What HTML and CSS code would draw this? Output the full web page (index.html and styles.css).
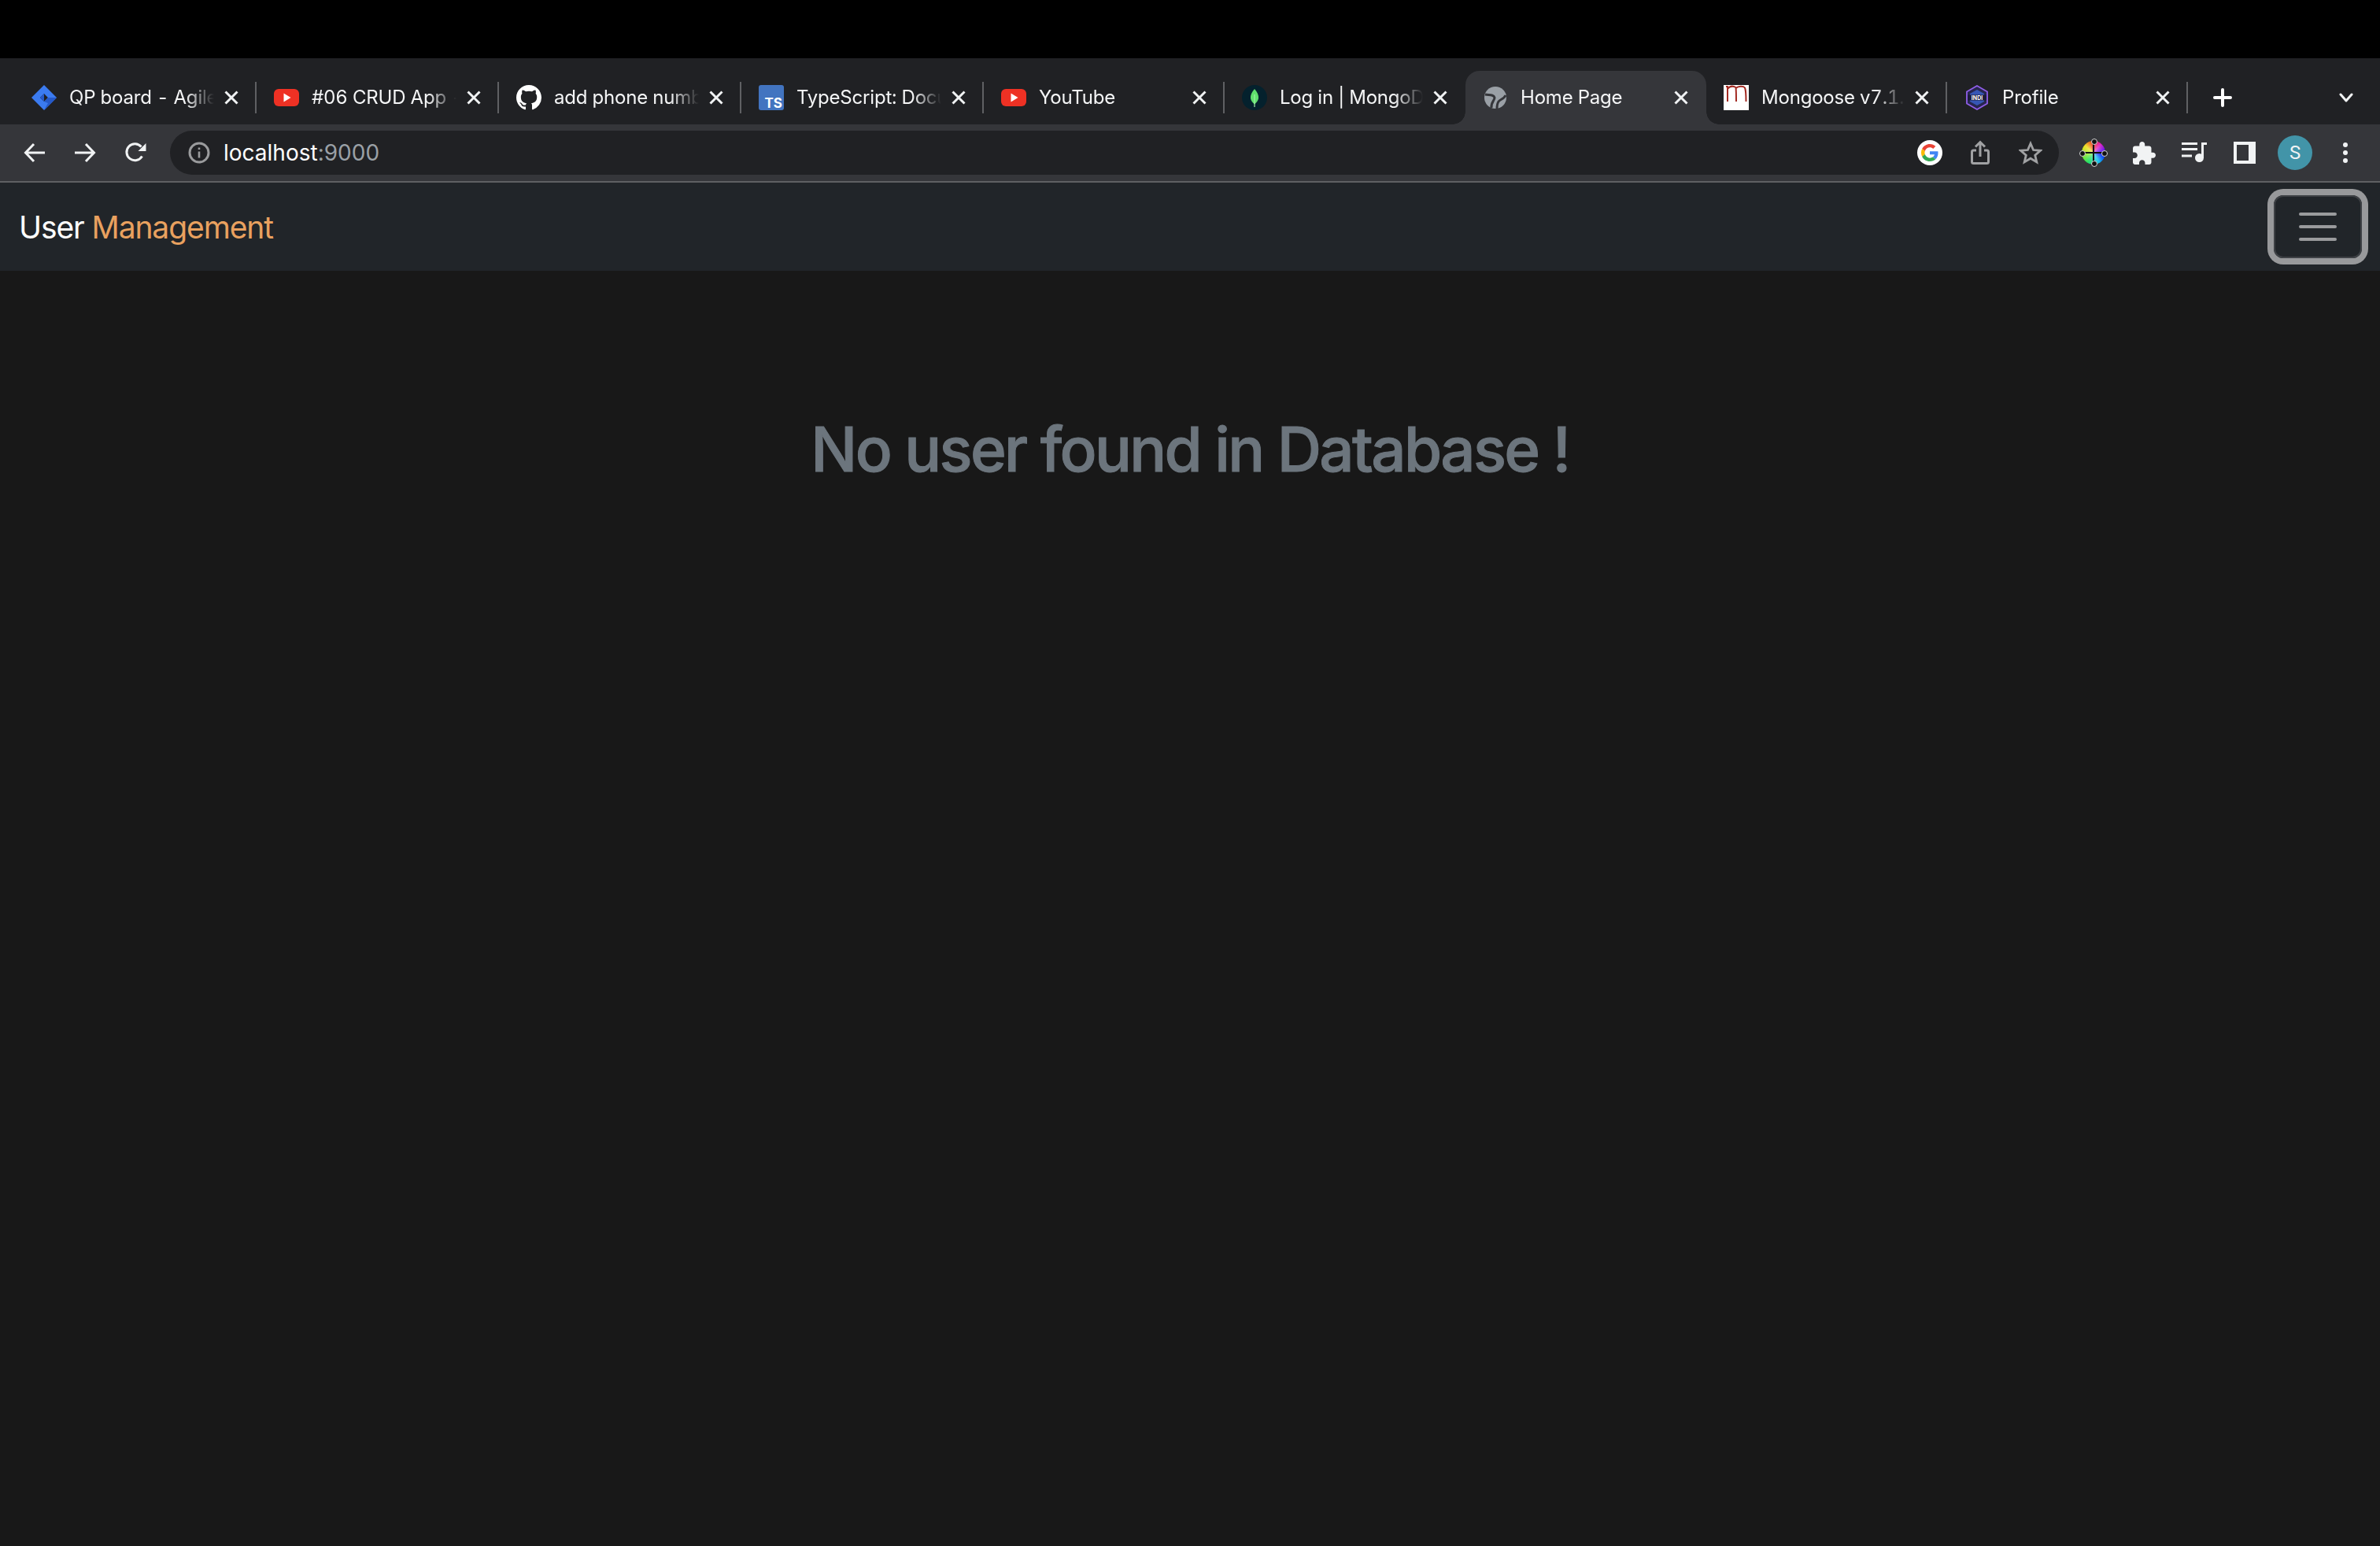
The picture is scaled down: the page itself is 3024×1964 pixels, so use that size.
FILE: index.html
```html
<!DOCTYPE html>
<html lang="en">
<head>
<meta charset="utf-8">
<title>Home Page</title>
<link rel="stylesheet" href="styles.css">
</head>
<body>
<svg class="defs" aria-hidden="true"><defs>
  <symbol id="close" viewBox="0 0 20 20"><path d="M2.5 2.5 17.5 17.5M17.5 2.5 2.5 17.5" fill="none" stroke="#f1f3f4" stroke-width="3"/></symbol>
  <symbol id="yt" viewBox="0 0 32 32"><rect x="0" y="5" width="32" height="22" rx="6" fill="#ee3124"/><path d="M12.5 10.5 21.5 16 12.5 21.5z" fill="#fff"/></symbol>
</defs></svg>

<div class="titlebar"></div>

<div class="tabstrip">
  <div class="tab">
    <svg class="favicon" viewBox="0 0 32 32"><path d="M16 0 32 16 16 32 0 16z M16 11 11 16 16 21 21 16z" fill="#3b7bf0" fill-rule="evenodd"/><path d="M16 11 11 16 16 21 21 16 32 16 16 32 21 23 16 21z" fill="#2559c9"/></svg>
    <span class="title">QP board - Agile board</span>
    <svg class="close"><use href="#close"/></svg><i class="sep"></i>
  </div>
  <div class="tab">
    <svg class="favicon"><use href="#yt"/></svg>
    <span class="title">#06 CRUD App - Node</span>
    <svg class="close"><use href="#close"/></svg><i class="sep"></i>
  </div>
  <div class="tab">
    <svg class="favicon" viewBox="0 0 16 16"><path fill="#fff" d="M8 0C3.58 0 0 3.58 0 8c0 3.54 2.29 6.53 5.47 7.59.4.07.55-.17.55-.38 0-.19-.01-.82-.01-1.49-2.01.37-2.53-.49-2.69-.94-.09-.23-.48-.94-.82-1.13-.28-.15-.68-.52-.01-.53.63-.01 1.08.58 1.23.82.72 1.21 1.87.87 2.33.66.07-.52.28-.87.51-1.07-1.78-.2-3.64-.89-3.64-3.95 0-.87.31-1.59.82-2.15-.08-.2-.36-1.02.08-2.12 0 0 .67-.21 2.2.82.64-.18 1.32-.27 2-.27.68 0 1.36.09 2 .27 1.53-1.04 2.2-.82 2.2-.82.44 1.1.16 1.92.08 2.12.51.56.82 1.27.82 2.15 0 3.07-1.87 3.75-3.65 3.95.29.25.54.73.54 1.48 0 1.07-.01 1.93-.01 2.2 0 .21.15.46.55.38A8.013 8.013 0 0016 8c0-4.42-3.58-8-8-8z"/></svg>
    <span class="title">add phone number</span>
    <svg class="close"><use href="#close"/></svg><i class="sep"></i>
  </div>
  <div class="tab">
    <svg class="favicon" viewBox="0 0 32 32"><rect width="32" height="32" rx="3" fill="#4274c0"/><text class="ts-mark" x="30" y="29" text-anchor="end">TS</text></svg>
    <span class="title">TypeScript: Documentation</span>
    <svg class="close"><use href="#close"/></svg><i class="sep"></i>
  </div>
  <div class="tab tab-narrow">
    <svg class="favicon"><use href="#yt"/></svg>
    <span class="title">YouTube</span>
    <svg class="close"><use href="#close"/></svg><i class="sep"></i>
  </div>
  <div class="tab tab-narrow tab-before-active">
    <svg class="favicon" viewBox="0 0 32 32"><circle cx="16" cy="16" r="16" fill="#04212d"/><path d="M16 5C19.5 9 21.5 13 21 17 20.5 20.500 18 22.500 16.600 24L15.400 24C14 22.500 11.500 20.500 11 17 10.500 13 12.500 9 16 5z" fill="#5fdf6d"/><path d="M16 12V28" stroke="#9ff2a6" stroke-width="1.200"/></svg>
    <span class="title">Log in | MongoDB</span>
    <svg class="close"><use href="#close"/></svg><i class="sep"></i>
  </div>
  <div class="tab tab-narrow tab-active">
    <svg class="favicon" viewBox="0 0 32 32"><circle cx="16" cy="16" r="14" fill="#9aa0a6"/><path d="M3 12C8 13 14 12 15 16 15 20 10 22 11 29M29 13C27 18 22 18 20 21 18 24 18 27 18 30" fill="none" stroke="#35363a" stroke-width="3"/></svg>
    <span class="title">Home Page</span>
    <svg class="close"><use href="#close"/></svg><i class="sep"></i>
  </div>
  <div class="tab tab-narrow">
    <svg class="favicon" viewBox="0 0 32 32"><rect width="32" height="32" fill="#fff"/><path d="M3 2H6M5 2V21M5 5C8 1 12 1 15.500 3 16 8 16 15 16 21M15.500 4C19 1 25 1 27 3.500 28.500 7 28.500 15 28.500 21" fill="none" stroke="#a32a22" stroke-width="2"/></svg>
    <span class="title">Mongoose v7.1.0</span>
    <svg class="close"><use href="#close"/></svg><i class="sep"></i>
  </div>
  <div class="tab tab-narrow">
    <svg class="favicon" viewBox="0 0 32 32"><path d="M16 1 29 8.500V23.500L16 31 3 23.500V8.500z" fill="#27264f" stroke="#8f5ee8" stroke-width="1.800"/><path d="M16 6 25 11V21L16 26 7 21V11z" fill="#3656b5"/><rect x="4" y="12.500" width="24" height="7" fill="#1c1c3a"/><text class="indi-mark" x="16" y="18.600" text-anchor="middle">INDI</text></svg>
    <span class="title">Profile</span>
    <svg class="close"><use href="#close"/></svg><i class="sep"></i>
  </div>
  <svg class="new-tab" viewBox="0 0 24 24"><path d="M12 2V22M2 12H22" stroke="#fff" stroke-width="4" stroke-linecap="round"/></svg>
  <svg class="tab-search" viewBox="0 0 18 12"><path d="M2 2 9 10 16 2" fill="none" stroke="#f1f3f4" stroke-width="3" stroke-linecap="round" stroke-linejoin="round"/></svg>
</div>

<div class="toolbar">
  <div class="tool"><svg class="glyph" viewBox="0 0 28 26"><path d="M27 13H3M13 2 2.500 13 13 24" fill="none" stroke="#f1f3f4" stroke-width="3"/></svg></div>
  <div class="tool"><svg class="glyph" viewBox="0 0 28 26"><path d="M1 13H25M15 2 25.500 13 15 24" fill="none" stroke="#f1f3f4" stroke-width="3"/></svg></div>
  <div class="tool"><svg class="glyph" viewBox="0 0 28 26"><path d="M22.500 17.500A10.500 10.500 0 1 1 21.500 5.500" fill="none" stroke="#f1f3f4" stroke-width="3"/><path d="M27.500 1V11H17.500z" fill="#f1f3f4"/></svg></div>
  <div class="omnibox">
    <svg class="info" viewBox="0 0 28 28"><circle cx="14" cy="14" r="12" fill="none" stroke="#9a9b9d" stroke-width="3"/><path d="M14 12.500V20.500M14 7.500V10" stroke="#9a9b9d" stroke-width="2.600"/></svg>
    <span class="url">localhost<span class="port">:9000</span></span>
    <div class="tool"><svg class="google" viewBox="0 0 32 32"><circle cx="16" cy="16" r="16" fill="#fff"/><g transform="translate(5 5) scale(.4583)"><path fill="#EA4335" d="M24 9.500c3.540 0 6.710 1.220 9.210 3.600l6.850-6.850C35.900 2.380 30.470 0 24 0 14.620 0 6.510 5.380 2.560 13.220l7.980 6.190C12.430 13.720 17.740 9.500 24 9.500z"/><path fill="#4285F4" d="M46.980 24.550c0-1.570-.15-3.090-.38-4.550H24v9.020h12.940c-.58 2.960-2.260 5.480-4.780 7.180l7.730 6c4.510-4.180 7.090-10.360 7.090-17.650z"/><path fill="#FBBC05" d="M10.530 28.590c-.48-1.450-.76-2.990-.76-4.590s.27-3.140.76-4.590l-7.980-6.190C.92 16.460 0 20.120 0 24c0 3.880.92 7.540 2.560 10.780l7.970-6.190z"/><path fill="#34A853" d="M24 48c6.480 0 11.930-2.130 15.890-5.810l-7.730-6c-2.150 1.450-4.920 2.300-8.160 2.300-6.260 0-11.570-4.220-13.470-9.910l-7.980 6.190C6.510 42.620 14.620 48 24 48z"/></g></svg></div>
    <div class="tool"><svg class="glyph-tall" viewBox="0 0 28 32"><path d="M9 13H5.500Q3.500 13 3.500 15V27.500Q3.500 29.500 5.500 29.500H22.500Q24.500 29.500 24.500 27.500V15Q24.500 13 22.500 13H19" fill="none" stroke="#a0a1a3" stroke-width="3"/><path d="M14 21V3M8 8.500 14 2.500 20 8.500" fill="none" stroke="#a0a1a3" stroke-width="3"/></svg></div>
    <div class="tool"><svg class="glyph-tall" viewBox="0 0 32 32"><path d="M16 3.500 19.800 12.300 29.300 13.100 22.100 19.400 24.300 28.700 16 23.700 7.700 28.700 9.900 19.400 2.700 13.100 12.200 12.300z" fill="none" stroke="#a0a1a3" stroke-width="3"/></svg></div>
  </div>
  <div class="tools-right">
    <div class="tool"><div class="wheel"><i class="wheel-v"></i><i class="wheel-h"></i></div></div>
    <div class="tool"><svg class="puzzle" viewBox="2 1 21 21"><path fill="#f1f3f4" d="M20.500 11H19V7c0-1.100-.9-2-2-2h-4V3.500C13 2.120 11.880 1 10.500 1S8 2.120 8 3.500V5H4c-1.100 0-1.990.9-1.990 2v3.800H3.500c1.490 0 2.700 1.210 2.700 2.700s-1.210 2.700-2.700 2.700H2V20c0 1.100.9 2 2 2h3.800v-1.500c0-1.490 1.210-2.700 2.700-2.700 1.490 0 2.700 1.210 2.700 2.700V22H17c1.100 0 2-.9 2-2v-4h1.500c1.380 0 2.500-1.120 2.500-2.500S21.880 11 20.500 11z"/></svg></div>
    <div class="tool"><svg class="queue" viewBox="0 0 32 26"><path d="M0 1.500H20M0 8.500H20M0 17H13" stroke="#f1f3f4" stroke-width="3"/><circle cx="22.500" cy="19.500" r="5.500" fill="#f1f3f4"/><path d="M26.500 20V1.500H32" fill="none" stroke="#f1f3f4" stroke-width="3"/></svg></div>
    <div class="tool"><div class="side-panel"></div></div>
    <div class="tool"><div class="avatar">S</div></div>
    <div class="tool"><svg class="dots" viewBox="0 0 6 26"><circle cx="3" cy="3" r="3" fill="#f1f3f4"/><circle cx="3" cy="13" r="3" fill="#f1f3f4"/><circle cx="3" cy="23" r="3" fill="#f1f3f4"/></svg></div>
  </div>
</div>

<nav class="navbar">
  <a class="brand">User <span class="brand-accent">Management</span></a>
  <button class="toggler" type="button" aria-label="Toggle navigation"><i></i><i></i><i></i></button>
</nav>

<main class="content">
  <h1 class="empty">No user found in Database !</h1>
</main>
</body>
</html>
```

FILE: styles.css
```css
* { box-sizing: border-box; }

html, body { height: 100%; }

body {
  margin: 0;
  height: 1964px;
  overflow: hidden;
  background: #181818;
  font-family: Inter, "Liberation Sans", sans-serif;
  color: #fff;
}

.defs { width: 0; height: 0; display: block; position: absolute; }

.titlebar { height: 74px; background: #000; }

/* tab strip */
.tabstrip {
  height: 84px;
  background: #202124;
  padding: 16px 0 0 18px;
  display: flex;
  align-items: stretch;
}

.tab {
  position: relative;
  flex: 0 0 308px;
  min-width: 0;
  height: 68px;
  padding-left: 22px;
  display: flex;
  align-items: center;
}

.tab-narrow { flex-basis: 306px; }

.favicon { flex: 0 0 32px; width: 32px; height: 32px; margin-right: 16px; }

.title {
  flex: 1;
  min-width: 0;
  overflow: hidden;
  white-space: nowrap;
  font-size: 24px;
  line-height: 32px;
  letter-spacing: -0.2px;
  font-variant-numeric: tabular-nums;
  color: #f4f5f6;
  -webkit-mask-image: linear-gradient(to right, #000 calc(100% - 36px), transparent);
  mask-image: linear-gradient(to right, #000 calc(100% - 36px), transparent);
}

.close { flex: 0 0 20px; width: 20px; height: 20px; margin: 0 20px 0 12px; }

.sep { flex: 0 0 2px; height: 40px; background: #5f6063; }

.tab-before-active .sep, .tab-active .sep { background: transparent; }

.tab-active { background: #35363a; border-radius: 18px 18px 0 0; }

.tab-active::before, .tab-active::after {
  content: "";
  position: absolute;
  bottom: 0;
  width: 16px;
  height: 16px;
}

.tab-active::before {
  left: -16px;
  background: radial-gradient(circle at 0 0, transparent 15.5px, #35363a 16px);
}

.tab-active::after {
  right: -16px;
  background: radial-gradient(circle at 100% 0, transparent 15.500px, #35363a 16px);
}

.ts-mark { font: 700 17px Inter, sans-serif; fill: #fff; }
.indi-mark { font: 700 7px Inter, sans-serif; fill: #fff; }

.new-tab { flex: none; align-self: center; width: 24px; height: 24px; margin-left: 32px; }
.tab-search { flex: none; align-self: center; width: 18px; height: 12px; margin-left: 136px; }

/* toolbar */
.toolbar {
  height: 74px;
  padding: 0 12px 8px;
  background: #35363a;
  border-bottom: 2px solid #5f6063;
  display: flex;
  align-items: flex-end;
}

.tool {
  flex: 0 0 64px;
  height: 56px;
  display: flex;
  align-items: center;
  justify-content: center;
}

.glyph { width: 28px; height: 26px; }
.glyph-tall { width: 30px; height: 32px; }

.omnibox {
  flex: 1;
  height: 56px;
  margin: 0 12px;
  padding: 0 4px 0 23px;
  background: #202124;
  border-radius: 28px;
  display: flex;
  align-items: center;
}

.info { width: 28px; height: 28px; margin-right: 17px; }

.url {
  margin-right: auto;
  font-size: 28px;
  line-height: 36px;
  color: #fff;
}

.port { color: #9aa0a6; }

.google { width: 32px; height: 32px; }

.tools-right { display: flex; }

.wheel {
  position: relative;
  width: 30px;
  height: 30px;
  border-radius: 50%;
  background:
    radial-gradient(circle, rgba(255,255,255,.45), rgba(255,255,255,0) 70%),
    conic-gradient(#e8201c, #e020c0, #5a10f0 80deg, #0010f0 100deg, #10c0f0 150deg, #20e060 210deg, #90e820 260deg, #f0e020 310deg, #e8201c);
}

.wheel-v, .wheel-h { position: absolute; background: #111; }
.wheel-v { left: 14px; top: -1px; width: 2px; height: 32px; }
.wheel-h { top: 14px; left: -1px; height: 2px; width: 32px; }

.wheel-v::before, .wheel-v::after, .wheel-h::before, .wheel-h::after {
  content: "";
  position: absolute;
  width: 6px;
  height: 6px;
  border-radius: 50%;
  background: #111;
  border: 1px solid #d8d8d8;
}

.wheel-v::before { left: -2px; top: -2px; }
.wheel-v::after { left: -2px; bottom: -2px; }
.wheel-h::before { top: -2px; left: -2px; }
.wheel-h::after { top: -2px; right: -2px; }

.puzzle { width: 29px; height: 29px; }
.queue { width: 32px; height: 26px; }

.side-panel {
  width: 28px;
  height: 28px;
  background: #35363a;
  border: solid #f1f3f4;
  border-width: 4px 9px 4px 4px;
}

.avatar {
  width: 44px;
  height: 44px;
  border-radius: 50%;
  background: #4294a8;
  color: #f1f3f4;
  display: flex;
  align-items: center;
  justify-content: center;
  font: 400 24px Roboto, sans-serif;
}

.dots { width: 6px; height: 26px; }

/* navbar */
.navbar {
  height: 112px;
  padding: 0 23px 0 24px;
  background: #212529;
  display: flex;
  align-items: center;
  justify-content: space-between;
}

.brand { margin-top: 2px; font-size: 39px; line-height: 60px; letter-spacing: -1.1px; color: #fff; }
.brand-accent { color: #e9a15f; }

.toggler {
  width: 112px;
  height: 80px;
  padding: 0;
  background: transparent;
  border: 2px solid #3e4145;
  border-radius: 12px;
  box-shadow: 0 0 0 8px #98999b;
  display: flex;
  flex-direction: column;
  align-items: center;
  justify-content: center;
  gap: 12px;
}

.toggler i { width: 48px; height: 4px; border-radius: 2px; background: #9a9b9d; }

/* content */
.content { padding-top: 179px; text-align: center; }

.empty {
  margin: 0;
  font-size: 78px;
  line-height: 96px;
  font-weight: 500;
  letter-spacing: -2.65px;
  -webkit-text-stroke: 1px #6c757d;
  color: #6c757d;
}
```
